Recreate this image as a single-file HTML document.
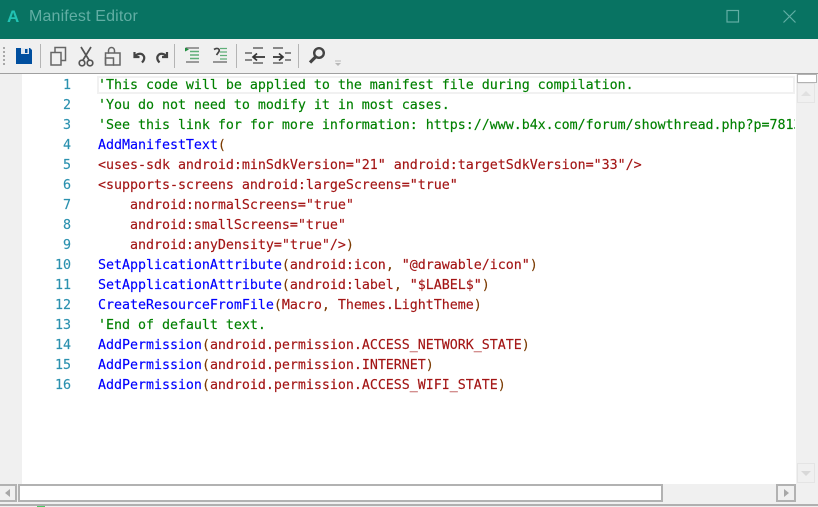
<!DOCTYPE html>
<html><head><meta charset="utf-8"><style>
html,body{margin:0;padding:0;width:818px;height:507px;overflow:hidden;background:#f0f0f0}
body{position:relative;font-family:"Liberation Sans",sans-serif}
.a{position:absolute}
#t{left:0;top:0;width:818px;height:39px;background:#087362}
#t .ti{left:29px;top:8px;font-size:16px;line-height:18px;color:#62aea4;letter-spacing:.15px}
#t .l{left:7px;top:7px;font-size:17px;line-height:20px;font-weight:bold;color:#22c3b4}
#tb{left:0;top:39px;width:818px;height:34px;background:#f0f0f0}
#ed{left:22px;top:74px;width:774px;height:410px;background:#fff}
.hl{left:97px;top:76px;width:698px;height:18px;border:2px solid #f1f1f1;box-sizing:border-box;background:#fff}
pre{margin:0;position:absolute;font-family:"DejaVu Sans Mono",monospace;font-size:13.33px;line-height:20px;white-space:pre;letter-spacing:-.03px;-webkit-text-stroke:.15px}
#code{left:98px;top:76px;width:697px;height:320px;overflow:hidden;color:#a31515}
#nums{left:30px;top:76px;width:41px;text-align:right;color:#2b91af}
.c{color:#008000}.f{color:#0000ff}.s{color:#a31515}.p{color:#7a3a00}
.sb{background:#fff;border:2px solid #b2b2b2;box-sizing:border-box}
</style></head><body>
<div class="a" id="t">
<div class="a l">A</div><div class="a ti">Manifest Editor</div>
<svg class="a" style="left:0;top:0" width="818" height="39"><rect x="727" y="10.500" width="11.500" height="11.500" fill="none" stroke="#62aea4" stroke-width="1.200"/><path d="M783.500 10.500L795.500 22.500M795.500 10.500L783.500 22.500" stroke="#62aea4" stroke-width="1.200" fill="none"/></svg>
</div>
<div class="a" id="tb"></div>
<svg class="a" style="left:0;top:39px" width="360" height="34" fill="none">
<g fill="#a8a8a8"><rect x="3" y="8" width="2" height="2"/><rect x="3" y="12" width="2" height="2"/><rect x="3" y="16" width="2" height="2"/><rect x="3" y="20" width="2" height="2"/><rect x="3" y="24" width="2" height="2"/></g>
<path d="M16 9h14l2 2v14H16z" fill="#004f9f"/><rect x="21" y="9" width="8" height="6" fill="#dfe6ee"/><rect x="25" y="10" width="2.500" height="4" fill="#004f9f"/>
<g stroke="#666" stroke-width="1.500"><rect x="51" y="13.500" width="10" height="12.500"/><path d="M55 13V8.500h10.500V21.500h-4"/></g>
<g stroke="#555" stroke-width="1.700"><path d="M81 8l8 13M91 8l-8 13"/><circle cx="82" cy="24" r="2.800"/><circle cx="90" cy="24" r="2.800"/></g>
<g stroke="#666" stroke-width="1.500"><path d="M105.500 25V14h3v-2.500a3 3 0 0 1 6 0V14h5.500v12h-7"/><rect x="105.500" y="19" width="8" height="7"/><path d="M108 14h6"/></g>
<path d="M134.500 13v5h5M135 17.500c2-3 6-3.500 8-1.500 2 2 1.500 5-1 7.500" stroke="#444" stroke-width="2.200"/>
<path d="M167 13v5h-5M166.500 17.500c-2-3-6-3.500-8-1.500-2 2-1.500 5 1 7.500" stroke="#444" stroke-width="2.200"/>
<rect x="40" y="5" width="1" height="24" fill="#b4b4b4"/><rect x="174" y="5" width="1" height="24" fill="#b4b4b4"/><rect x="236" y="5" width="1" height="24" fill="#b4b4b4"/><rect x="298" y="5" width="1" height="24" fill="#b4b4b4"/>
<path d="M186 9h13M186 23h13" stroke="#666" stroke-width="1.300"/><path d="M185 8.500l4 2-4 2z" fill="#1f8f3f"/><path d="M190 12.500h9M190 16h9M190 19.500h9" stroke="#5fae78" stroke-width="1.400"/>
<path d="M214 10.500c3-2 6-1 5 2l-2.500 3.500" stroke="#444" stroke-width="1.700"/><path d="M220 9.500h7M220 13h7M220 16.500h7M220 20h7" stroke="#5fae78" stroke-width="1.300"/><path d="M213 23h14" stroke="#666" stroke-width="1.300"/>
<g stroke="#666" stroke-width="1.600"><path d="M253 9h10M245 14h7M245 21h7M253 24h10"/></g><path d="M253 18h12M257 14.500L253 18l4 3.500" stroke="#333" stroke-width="1.700"/>
<g stroke="#666" stroke-width="1.600"><path d="M273 9h10M285 14h6M285 21h6M273 24h10"/></g><path d="M273 18h10M279 14.500l4 3.500-4 3.500" stroke="#333" stroke-width="1.700"/>
<circle cx="319" cy="14" r="4.800" stroke="#444" stroke-width="2.400"/><path d="M315.500 18L310 23.500" stroke="#444" stroke-width="3.200"/>
<path d="M335 22h6" stroke="#b8b8b8"/><path d="M335 24h6l-3 3z" fill="#b8b8b8"/>
</svg>
<div class="a" style="left:0;top:73px;width:818px;height:1px;background:#a0a0a0"></div>
<div class="a" id="ed"></div>
<div class="a hl"></div>
<pre class="a" id="nums">1
2
3
4
5
6
7
8
9
10
11
12
13
14
15
16</pre>
<pre class="a" id="code"><span class="c">'This code will be applied to the manifest file during compilation.
'You do not need to modify it in most cases.
'See this link for for more information: https://www.b4x.com/forum/showthread.php?p=78136</span>
<span class="f">AddManifestText</span><span class="p">(</span>
&lt;uses-sdk android:minSdkVersion="21" android:targetSdkVersion="33"/&gt;
&lt;supports-screens android:largeScreens="true"
    android:normalScreens="true"
    android:smallScreens="true"
    android:anyDensity="true"/&gt;<span class="p">)</span>
<span class="f">SetApplicationAttribute</span><span class="p">(</span>android:icon<span class="p">,</span> "@drawable/icon"<span class="p">)</span>
<span class="f">SetApplicationAttribute</span><span class="p">(</span>android:label<span class="p">,</span> "$LABEL$"<span class="p">)</span>
<span class="f">CreateResourceFromFile</span><span class="p">(</span>Macro<span class="p">,</span> Themes.LightTheme<span class="p">)</span>
<span class="c">'End of default text.</span>
<span class="f">AddPermission</span><span class="p">(</span>android.permission.ACCESS_NETWORK_STATE<span class="p">)</span>
<span class="f">AddPermission</span><span class="p">(</span>android.permission.INTERNET<span class="p">)</span>
<span class="f">AddPermission</span><span class="p">(</span>android.permission.ACCESS_WIFI_STATE<span class="p">)</span></pre>
<div class="a" style="left:796px;top:74px;width:22px;height:410px;background:#f0f0f0"></div>
<div class="a sb" style="left:797px;top:74px;width:20px;height:9px;border-width:1.500px"></div>
<div class="a" style="left:797px;top:83px;width:18px;height:20px;background:#f0f0f0;border:1px solid #e4e4e4;box-sizing:border-box"></div>
<div class="a" style="left:797px;top:463px;width:18px;height:20px;background:#f0f0f0;border:1px solid #e4e4e4;box-sizing:border-box"></div>
<svg class="a" style="left:796px;top:84px" width="22" height="400"><path d="M5 12h10l-5-5z" fill="#e0e0e0"/><path d="M5 387h10l-5 5z" fill="#d8d8d8"/></svg>
<div class="a" style="left:0;top:484px;width:796px;height:20px;background:#f0f0f0"></div>
<div class="a" style="left:0;top:484px;width:17px;height:18px;background:#f0f0f0;border:solid #b2b2b2;border-width:2px 2px 2px 0;box-sizing:border-box"></div>
<div class="a sb" style="left:18px;top:484px;width:645px;height:18px"></div>
<div class="a sb" style="left:776px;top:484px;width:20px;height:18px;background:#f0f0f0"></div>
<svg class="a" style="left:0;top:484px" width="818" height="18"><path d="M10 5v8L5 9z" fill="#a8a8a8"/><path d="M784 5v8L789 9z" fill="#a8a8a8"/></svg>
<div class="a" style="left:0;top:504px;width:818px;height:2px;background:#b0b0b0"></div>
<div class="a" style="left:37px;top:506px;width:8px;height:1px;background:#4cc864"></div>
</body></html>
